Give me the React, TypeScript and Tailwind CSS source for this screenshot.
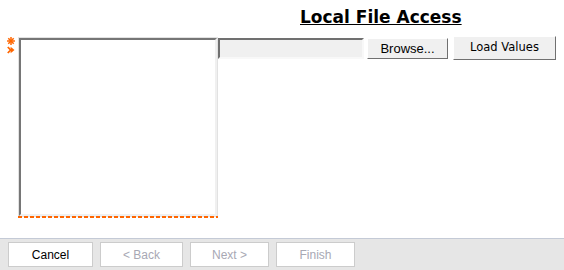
import React from "react";

function Star() {
  return (
    <svg width="8" height="8" viewBox="0 0 8 8" className="block">
      <g stroke="#ff6600" strokeWidth="1.5" strokeLinecap="square">
        <line x1="4" y1="0.8" x2="4" y2="7.2" />
        <line x1="0.8" y1="4" x2="7.2" y2="4" />
        <line x1="1.8" y1="1.8" x2="6.2" y2="6.2" />
        <line x1="6.2" y1="1.8" x2="1.8" y2="6.2" />
      </g>
    </svg>
  );
}

function Arrow() {
  return (
    <svg width="8" height="8" viewBox="0 0 8 8" className="block">
      <path d="M0.8 1 L3.6 4 L0.8 7" fill="none" stroke="#ff6600" strokeWidth="1.8" />
      <path d="M3.6 0.8 L7.5 4 L3.6 7.2 Z" fill="#ff6600" />
    </svg>
  );
}

function BarButton({ label, disabled, w }: { label: string; disabled?: boolean; w: string }) {
  return (
    <div
      className={`${w} h-[25px] bg-white border border-[#cccccc] flex items-center justify-center text-[12px] ${
        disabled ? "text-[#a8a8b4]" : "text-black"
      }`}
      style={{ fontFamily: '"Liberation Sans", Arial, sans-serif' }}
    >
      {label}
    </div>
  );
}

export default function App() {
  return (
    <div className="w-[564px] h-[270px] bg-white flex flex-col overflow-hidden">
      <div className="h-[238px] flex flex-col">
        <div className="h-[36px] pl-[300px] pt-[5px]">
          <span
            className="text-[17px] font-bold underline text-black leading-[22px]"
            style={{ fontFamily: '"DejaVu Sans", Verdana, sans-serif' }}
          >
            Local File Access
          </span>
        </div>
        <div className="flex items-start">
          <div className="w-[18px] pl-[7px] pt-[1px] flex flex-col gap-[1px]">
            <Star />
            <Arrow />
          </div>
          <div className="flex flex-col">
            <div className="ml-[1px] w-[198px] h-[178px] mt-[2px] bg-white border-2 border-t-[#767676] border-l-[#767676] border-b-[#f0f0f0] border-r-[#f0f0f0] shadow-[0_0_0_1px_#e2e2e2]" />
            <div className="w-[200px] h-[2px] bg-[repeating-linear-gradient(90deg,#ff6600_0_4px,transparent_4px_6px)]" />
          </div>
          <div className="flex items-start">
            <div className="w-[146px] h-[21px] mt-[2px] bg-[#f0f0f0] border-2 border-t-[#707070] border-l-[#707070] border-b-[#f8f8f8] border-r-[#f8f8f8]" />
            <div
              className="ml-[3px] mt-[2px] w-[81px] h-[21px] bg-[#f0f0f0] border border-t-white border-l-white border-b-[#707070] border-r-[#707070] flex items-center justify-center text-[13px] text-black"
              style={{ fontFamily: '"Liberation Sans", Arial, sans-serif' }}
            >
              Browse...
            </div>
            <div
              className="ml-[5px] w-[103px] h-[24px] bg-[#f0f0f0] border border-t-white border-l-white border-b-[#707070] border-r-[#707070] flex items-center justify-center text-[11.5px] text-black"
              style={{ fontFamily: '"DejaVu Sans", Tahoma, sans-serif' }}
            >
              Load Values
            </div>
          </div>
        </div>
      </div>
      <div className="h-[32px] bg-[#e6e6e6] border-t border-[#c4cad6] flex items-start pt-[3px] pl-[8px] gap-[7px]">
        <BarButton label="Cancel" w="w-[85px]" />
        <BarButton label="< Back" disabled w="w-[83px]" />
        <BarButton label="Next >" disabled w="w-[79px]" />
        <BarButton label="Finish" disabled w="w-[79px]" />
      </div>
    </div>
  );
}
